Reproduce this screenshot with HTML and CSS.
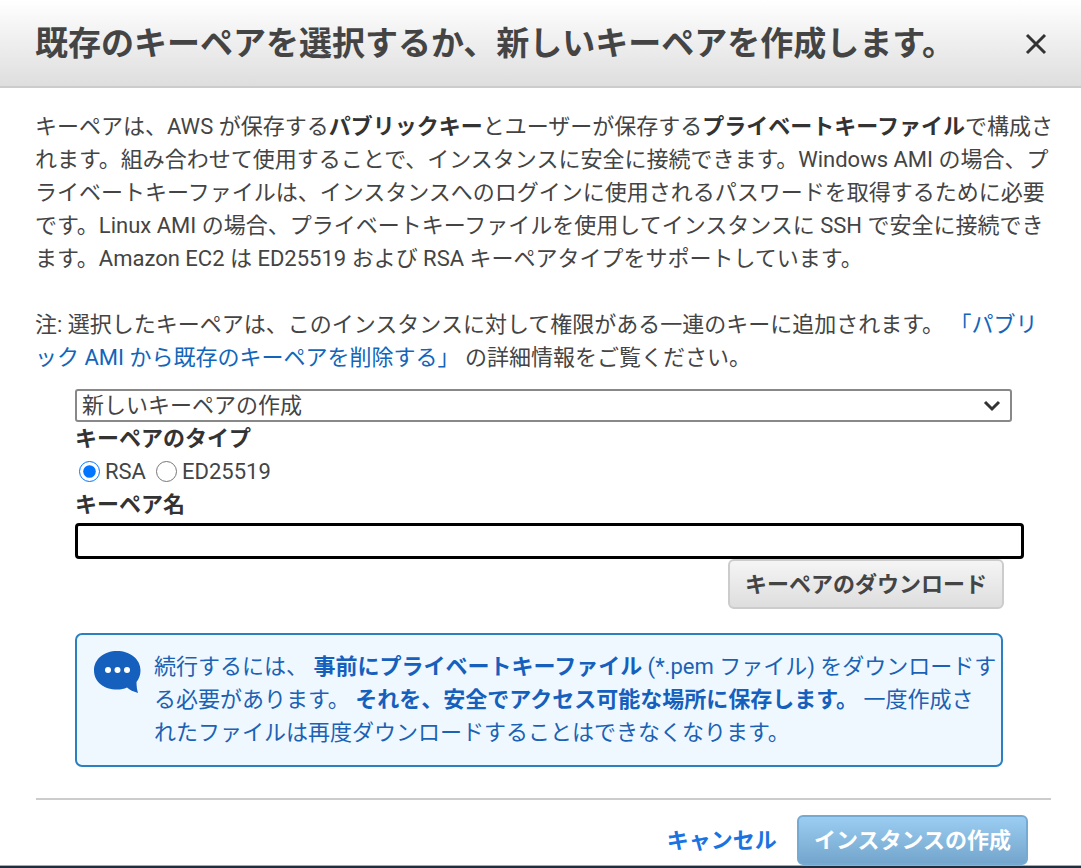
FILE: index.html
```html
<!DOCTYPE html>
<html lang="ja">
<head>
  <meta charset="UTF-8">
  <meta name="viewport" content="width=device-width, initial-scale=1.0">
  <title>キーペアの選択</title>
  <link rel="stylesheet" href="styles.css">
</head>
<body>
  <div class="dialog">
    <header class="dialog-header">
      <h1>既存のキーペアを選択するか、新しいキーペアを作成します。</h1>
      <button type="button" class="close" aria-label="閉じる">
        <svg width="22" height="22" viewBox="0 0 22 22"><path d="M2 2L20 20M20 2L2 20" stroke="#333" stroke-width="3" fill="none"/></svg>
      </button>
    </header>

    <main class="dialog-body">
      <p>キーペアは、AWS が保存する<b>パブリックキー</b>とユーザーが保存する<b>プライベートキーファイル</b>で構成されます。組み合わせて使用することで、インスタンスに安全に接続できます。Windows AMI の場合、プライベートキーファイルは、インスタンスへのログインに使用されるパスワードを取得するために必要です。Linux AMI の場合、プライベートキーファイルを使用してインスタンスに SSH で安全に接続できます。Amazon EC2 は ED25519 および RSA キーペアタイプをサポートしています。</p>
      <p>注: 選択したキーペアは、このインスタンスに対して権限がある一連のキーに追加されます。 <a href="#">「パブリック AMI から既存のキーペアを削除する」</a> の詳細情報をご覧ください。</p>

      <form class="key-form">
        <div class="select-wrap">
          <select aria-label="キーペア">
            <option>新しいキーペアの作成</option>
          </select>
          <svg class="arrow" width="18" height="12" viewBox="0 0 18 12"><path d="M2 2L9 9L16 2" stroke="#333" stroke-width="3" fill="none"/></svg>
        </div>
        <fieldset>
          <legend>キーペアのタイプ</legend>
          <div class="radios">
            <input type="radio" name="type" id="rsa" checked><label for="rsa">RSA</label>
            <input type="radio" name="type" id="ed"><label for="ed">ED25519</label>
          </div>
        </fieldset>
        <label class="field-label" for="key-name">キーペア名</label>
        <input type="text" class="key-name" id="key-name">
        <div class="download-row">
          <button type="button" class="btn">キーペアのダウンロード</button>
        </div>
      </form>

      <div class="notice">
        <svg class="bubble" width="48" height="44" viewBox="0 0 48 44">
          <path d="M24 1C11 1 1 9 1 20.500C1 32 11 39.500 24 39.500C28 39.500 31 39 34 37.500C37 40 40 41.500 45 43C44 40 43.500 36 43.500 32C46 29 47.500 25 47.500 20.500C47.500 9 37 1 24 1Z" fill="#1560bd"/>
          <circle cx="15" cy="20" r="3" fill="#fff"/>
          <circle cx="24.500" cy="20" r="3" fill="#fff"/>
          <circle cx="34" cy="20" r="3" fill="#fff"/>
        </svg>
        <p>続行するには、 <b>事前にプライベートキーファイル</b> (*.pem ファイル) をダウンロードする必要があります。 <b>それを、安全でアクセス可能な場所に保存します。</b> 一度作成さ<br>れたファイルは再度ダウンロードすることはできなくなります。</p>
      </div>
    </main>

    <footer class="dialog-footer">
      <a href="#">キャンセル</a>
      <button type="button" class="btn btn-primary">インスタンスの作成</button>
    </footer>
  </div>
</body>
</html>
```
FILE: styles.css
```css
* { box-sizing: border-box; }
body {
  margin: 0;
  background: #1f2d3d;
  font-family: Roboto, "Noto Sans CJK JP", sans-serif;
  font-size: 22px;
  line-height: 33px;
  color: #444;
}
.dialog {
  background: #fff;
  border-bottom: 1px solid #aaa;
  margin-bottom: 2px;
}
.dialog-header {
  display: flex;
  justify-content: space-between;
  align-items: center;
  height: 88px;
  padding: 2px 34px 0 35px;
  background: linear-gradient(#fff, #dedede);
  border-bottom: 2px solid #ccc;
}
h1 {
  margin: 0;
  font-size: 33px;
  line-height: 48px;
  white-space: nowrap;
}
.close {
  display: flex;
  padding: 0;
  border: none;
  background: none;
  cursor: pointer;
}
.dialog-body { padding: 22px 27px 31px 35px; }
p { margin: 0 0 33px; }
a { color: #1166bb; text-decoration: none; }
b { color: #333; }
.key-form {
  margin: -18px 0 0 40px;
}
.select-wrap {
  position: relative;
  margin-right: 42px;
}
select {
  display: block;
  appearance: none;
  width: 100%;
  height: 33px;
  padding: 0 5px;
  border: 2px solid #888;
  border-radius: 3px;
  background: #fff;
  font: inherit;
  line-height: 29px;
  color: #444;
}
.arrow {
  position: absolute;
  right: 11px;
  top: 11px;
  pointer-events: none;
}
fieldset {
  margin: 0;
  padding: 0;
  border: none;
}
legend, .field-label {
  display: block;
  padding: 0;
  font-weight: bold;
  color: #333;
}
.radios {
  display: flex;
  align-items: center;
  padding-left: 4px;
}
.radios input {
  width: 21px;
  height: 21px;
  margin: 0 5px 0 0;
}
.radios label { margin-right: 10px; }
.key-name {
  display: block;
  width: calc(100% - 30px);
  height: 36px;
  margin-top: 2px;
  padding: 0 6px;
  border: 3px solid #000;
  border-radius: 4px;
  font: inherit;
}
.download-row {
  display: flex;
  justify-content: flex-end;
  margin-right: 50px;
}
.btn {
  height: 50px;
  padding: 0 15px;
  border: 2px solid #ccc;
  border-radius: 6px;
  background: linear-gradient(#f5f5f5, #dedede);
  font: inherit;
  font-weight: bold;
  color: #444;
  cursor: pointer;
}
.notice {
  display: flex;
  align-items: flex-start;
  gap: 13px;
  margin: 24px 51px 0 40px;
  padding: 15px 4px 16px 16px;
  border: 2px solid #2a80c0;
  border-radius: 7px;
  background: #f0f8ff;
  color: #1b62b5;
}
.notice p { margin: 0; flex: 1; }
.notice b { color: #1560bd; }
.bubble { flex: none; }
.dialog-footer {
  display: flex;
  justify-content: flex-end;
  align-items: center;
  gap: 20px;
  margin: 0 30px 0 36px;
  padding: 15px 23px 0 0;
  border-top: 2px solid #ccc;
}
.dialog-footer a { font-weight: bold; color: #1a73e0; }
.btn-primary {
  border-color: #75abd2;
  background: linear-gradient(#9bcdf2, #74a6cd);
  color: #fff;
}
```
